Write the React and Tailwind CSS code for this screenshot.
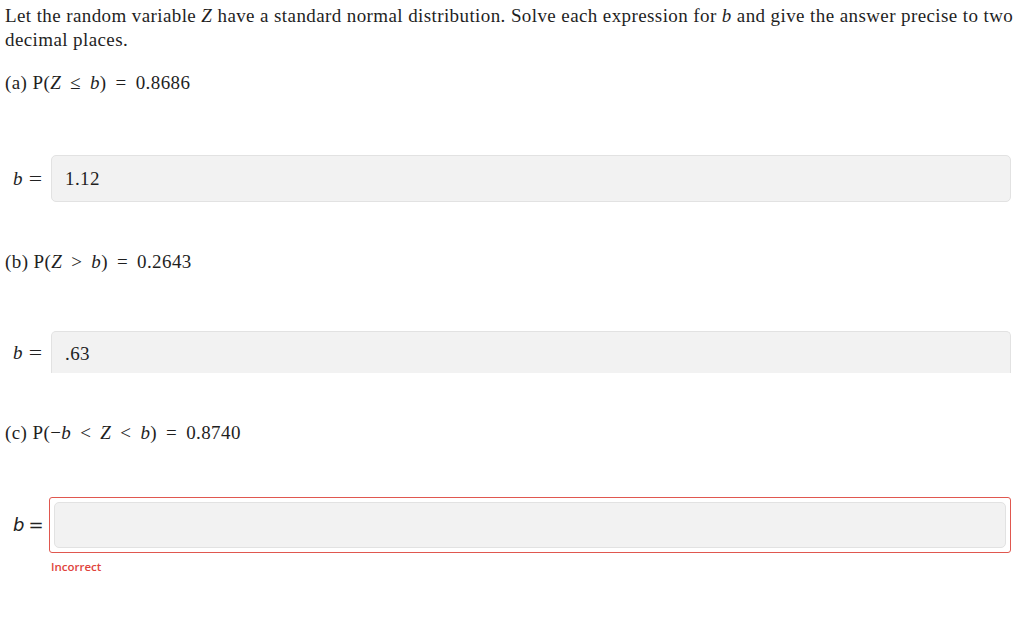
import React from "react";

const M = ({ children }) => (
  <span className="italic font-['Liberation_Serif']">{children}</span>
);

const R = ({ children }) => <span className="mx-[9px]">{children}</span>;

function Label() {
  return (
    <div className="w-[46px] shrink-0 pl-[8px] text-[19px] tracking-normal whitespace-nowrap font-['Liberation_Serif',serif] text-[#222]">
      <span className="italic">b</span>
      <span className="ml-[7px] inline-block scale-x-125">=</span>
    </div>
  );
}

export default function App() {
  return (
    <div className="bg-white min-h-[624px] w-[1024px] px-[5px] pt-[4px] font-['Liberation_Serif',serif] text-[19px] tracking-[0.4px] leading-[24px] text-[#1f1f1f]">
      <p className="whitespace-nowrap">
        Let the random variable <M>Z</M> have a standard normal distribution. Solve each expression for <M>b</M> and give the answer precise to two
        <br />
        decimal places.
      </p>

      <p className="mt-[19px]">
        (a) P(<M>Z</M><R>≤</R><M>b</M>)<R>=</R>0.8686
      </p>

      <div className="mt-[60px] mr-[8px] flex items-center">
        <Label />
        <div className="flex-1 h-[47px] rounded-[5px] border border-[#e2e2e2] bg-[#f2f2f2] pl-[13px] flex items-center">
          1.12
        </div>
      </div>

      <p className="mt-[48px]">
        (b) P(<M>Z</M><R>&gt;</R><M>b</M>)<R>=</R>0.2643
      </p>

      <div className="mt-[57px] mr-[8px] flex items-start">
        <div className="pt-[10px]"><Label /></div>
        <div className="flex-1 h-[42px] rounded-t-[5px] border border-b-0 border-[#e2e2e2] bg-[#f2f2f2] pl-[13px] pt-[10px]">
          .63
        </div>
      </div>

      <p className="mt-[48px]">
        (c) P(−<M>b</M><R>&lt;</R><M>Z</M><R>&lt;</R><M>b</M>)<R>=</R>0.8740
      </p>

      <div className="mt-[52px] mr-[8px] flex items-center">
        <div className="w-[44px] shrink-0 pl-[8px] text-[18px] tracking-normal whitespace-nowrap font-['DejaVu_Sans',sans-serif] text-[#222]">
          <span className="italic">b</span>
          <span className="ml-[4px]">=</span>
        </div>
        <div className="flex-1 h-[56px] rounded-[3px] border border-[#e0574f] p-[4px]">
          <div className="h-full rounded-[5px] border border-[#e2e2e2] bg-[#f2f2f2]" />
        </div>
      </div>
      <div className="ml-[46px] mt-[6px] font-['Open_Sans',sans-serif] text-[11.5px] tracking-normal leading-[16px] font-semibold text-[#e0443c]">
        Incorrect
      </div>
    </div>
  );
}
